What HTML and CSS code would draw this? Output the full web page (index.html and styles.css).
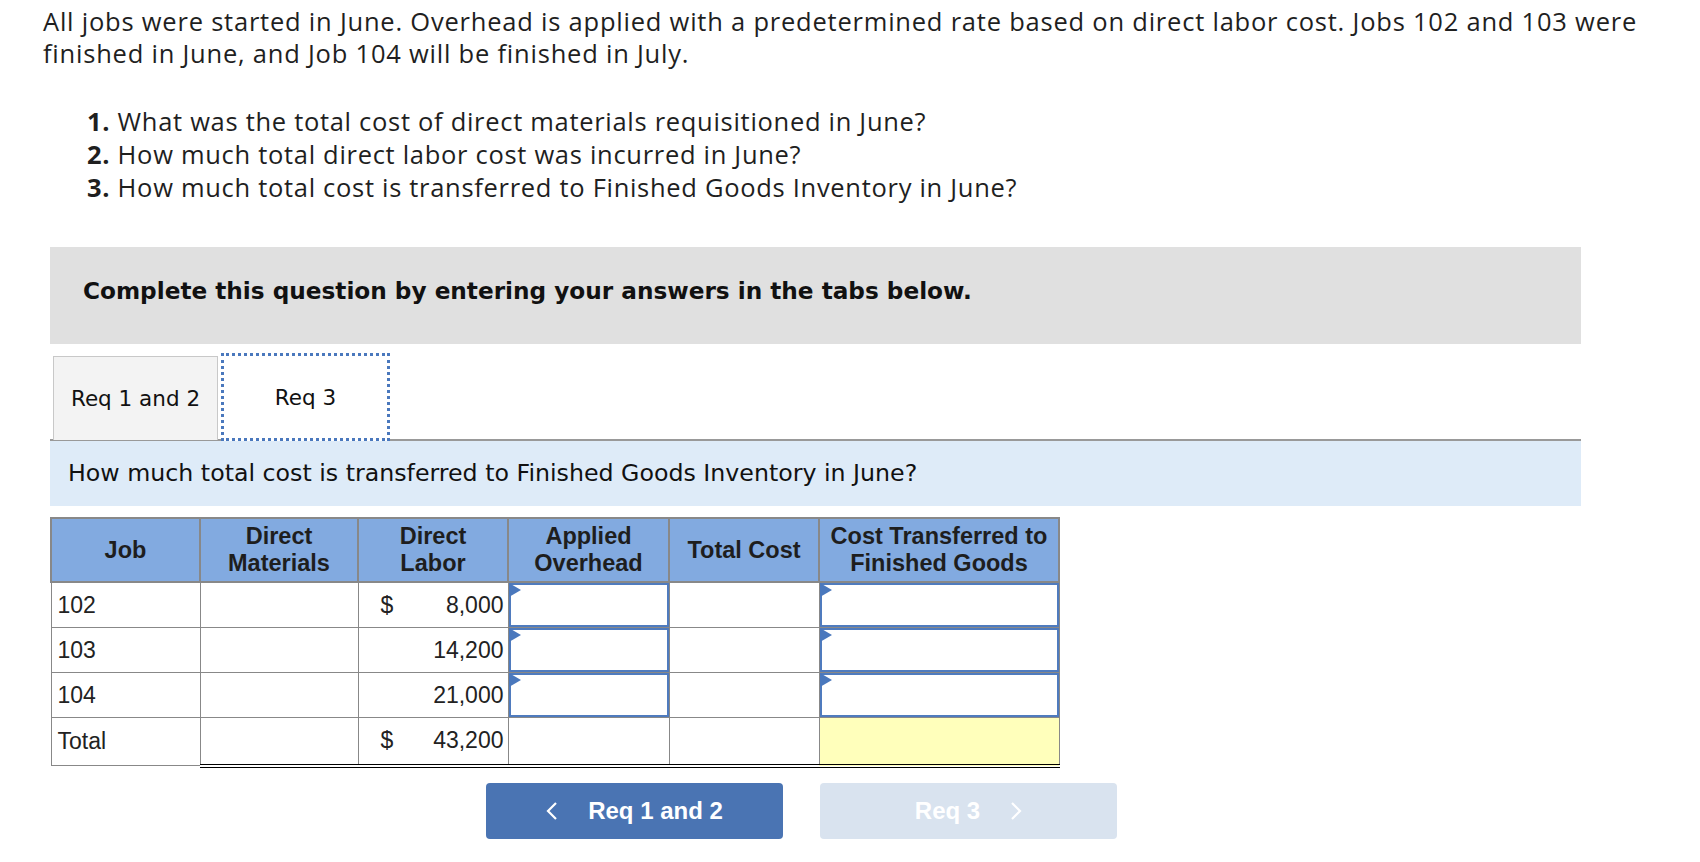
FILE: index.html
```html
<!DOCTYPE html>
<html>
<head>
<meta charset="utf-8">
<link rel="stylesheet" href="styles.css">
</head>
<body>
<div class="page">
  <p class="intro">All jobs were started in June. Overhead is applied with a predetermined rate based on direct labor cost. Jobs 102 and 103 were finished in June, and Job 104 will be finished in July.</p>
  <ol class="questions">
    <li><b>1.</b> What was the total cost of direct materials requisitioned in June?</li>
    <li><b>2.</b> How much total direct labor cost was incurred in June?</li>
    <li><b>3.</b> How much total cost is transferred to Finished Goods Inventory in June?</li>
  </ol>
  <div class="panel">
    <div class="instruct">Complete this question by entering your answers in the tabs below.</div>
    <div class="tabs">
      <div class="tab">Req 1 and 2</div>
      <div class="tab active">Req 3</div>
    </div>
    <div class="prompt">How much total cost is transferred to Finished Goods Inventory in June?</div>
    <table class="grid">
      <colgroup>
        <col class="c1"><col class="c2"><col class="c3"><col class="c4"><col class="c5"><col class="c6">
      </colgroup>
      <thead>
        <tr>
          <th>Job</th>
          <th>Direct<br>Materials</th>
          <th>Direct<br>Labor</th>
          <th>Applied<br>Overhead</th>
          <th>Total Cost</th>
          <th>Cost Transferred to<br>Finished Goods</th>
        </tr>
      </thead>
      <tbody>
        <tr>
          <td class="job">102</td>
          <td></td>
          <td class="num"><span class="cur">$</span>8,000</td>
          <td class="in"><div class="box"><svg class="flag" width="12" height="14" viewBox="0 0 12 14"><polygon points="0,0 12,7 0,14" fill="#4a78bd"/></svg></div></td>
          <td></td>
          <td class="in"><div class="box"><svg class="flag" width="12" height="14" viewBox="0 0 12 14"><polygon points="0,0 12,7 0,14" fill="#4a78bd"/></svg></div></td>
        </tr>
        <tr>
          <td class="job">103</td>
          <td></td>
          <td class="num">14,200</td>
          <td class="in"><div class="box"><svg class="flag" width="12" height="14" viewBox="0 0 12 14"><polygon points="0,0 12,7 0,14" fill="#4a78bd"/></svg></div></td>
          <td></td>
          <td class="in"><div class="box"><svg class="flag" width="12" height="14" viewBox="0 0 12 14"><polygon points="0,0 12,7 0,14" fill="#4a78bd"/></svg></div></td>
        </tr>
        <tr>
          <td class="job">104</td>
          <td></td>
          <td class="num">21,000</td>
          <td class="in"><div class="box"><svg class="flag" width="12" height="14" viewBox="0 0 12 14"><polygon points="0,0 12,7 0,14" fill="#4a78bd"/></svg></div></td>
          <td></td>
          <td class="in"><div class="box"><svg class="flag" width="12" height="14" viewBox="0 0 12 14"><polygon points="0,0 12,7 0,14" fill="#4a78bd"/></svg></div></td>
        </tr>
        <tr class="total">
          <td class="job">Total</td>
          <td></td>
          <td class="num"><span class="cur">$</span>43,200</td>
          <td></td>
          <td></td>
          <td class="yellow"></td>
        </tr>
      </tbody>
    </table>
    <div class="nav">
      <button class="btn prev"><svg width="12" height="20" viewBox="0 0 12 20"><polyline points="10,2 2,10 10,18" fill="none" stroke="#fff" stroke-width="2.2"/></svg><span>Req 1 and 2</span></button>
      <button class="btn next"><span>Req 3</span><svg width="12" height="20" viewBox="0 0 12 20"><polyline points="2,2 10,10 2,18" fill="none" stroke="#fff" stroke-width="2.2"/></svg></button>
    </div>
  </div>
</div>
</body>
</html>
```
FILE: styles.css
```css
* { box-sizing: border-box; }
html, body { margin: 0; padding: 0; background: #fff; }
.page {
  padding: 5px 40px 0 43px;
  color: #1f1f1f;
  font-family: "Open Sans", Lato, sans-serif;
}
.intro {
  margin: 0;
  font-size: 25.5px;
  letter-spacing: 0.78px;
  line-height: 32px;
}
.questions {
  list-style: none;
  margin: 36px 0 0 0;
  padding: 0 0 0 44px;
  font-size: 25.5px;
  letter-spacing: 0.7px;
  line-height: 33px;
}
.questions b { font-weight: 700; }
.panel {
  margin-top: 43px;
  margin-left: 7px;
  width: 1531px;
}
.instruct {
  background: #e0e0e0;
  height: 97px;
  padding: 30px 0 0 33px;
  font-family: "DejaVu Sans", Verdana, sans-serif;
  font-weight: 700;
  font-size: 23.2px;
  color: #111;
}
.tabs {
  display: flex;
  align-items: flex-end;
  margin-top: 10px;
  height: 87px;
  border-bottom: 2px solid #999;
  padding-left: 3px;
  gap: 3px;
}
.tab {
  width: 165px;
  height: 84px;
  margin-bottom: -1px;
  background: #f3f3f3;
  border: 1px solid #c8c8c8;
  border-bottom: none;
  display: flex;
  align-items: center;
  justify-content: center;
  font-family: "DejaVu Sans", Verdana, sans-serif;
  font-size: 21.5px;
  color: #111;
}
.tab.active {
  width: 169px;
  height: 88px;
  margin-bottom: -2px;
  background: #fff;
  border: 3px dotted #4a78bd;
}
.prompt {
  background: #deebf8;
  height: 65px;
  padding: 18px 0 0 18px;
  font-family: "DejaVu Sans", Verdana, sans-serif;
  font-size: 23.7px;
  color: #111;
}
.grid {
  margin-top: 11px;
  border-collapse: collapse;
  table-layout: fixed;
  width: 1008px;
  font-family: "Liberation Sans", Arial, sans-serif;
  font-size: 23px;
  color: #222;
}
.c1 { width: 149px; }
.c2 { width: 158px; }
.c3 { width: 150px; }
.c4 { width: 161px; }
.c5 { width: 150px; }
.c6 { width: 240px; }
.grid th {
  background: #82aae0;
  border: 2px solid #888;
  height: 64px;
  font-weight: 700;
  font-size: 23.5px;
  line-height: 27px;
  padding: 0;
  color: #1e1e1e;
}
.grid td {
  border: 1px solid #888;
  height: 44px;
  padding: 0 4px 0 6px;
}
.grid td.num { text-align: right; }
.cur { float: left; margin-left: 16px; }
.grid td.in { padding: 0; }
.box {
  position: relative;
  height: 44px;
  border: 2px solid #4f7bbe;
  background: #fff;
}
.flag {
  position: absolute;
  left: -2px;
  top: -2px;
  display: block;
}
.total td {
  height: 48px;
  border-top: 1px solid #111;
  border-bottom: 4px double #000;
}
.total td.job { border-bottom: 1px solid #888; border-top-color: #888; }
.total td.yellow { background: #ffffbb; }
.nav {
  display: flex;
  gap: 37px;
  margin-top: 15px;
  margin-left: 436px;
}
.btn {
  width: 297px;
  height: 56px;
  border: none;
  border-radius: 4px;
  display: flex;
  align-items: center;
  justify-content: center;
  gap: 30px;
  font-family: "Liberation Sans", Arial, sans-serif;
  font-weight: 700;
  font-size: 24px;
  color: #fff;
  padding: 0;
}
.btn.prev { background: #4a74b3; }
.btn.next { background: #d9e3ef; }
```
